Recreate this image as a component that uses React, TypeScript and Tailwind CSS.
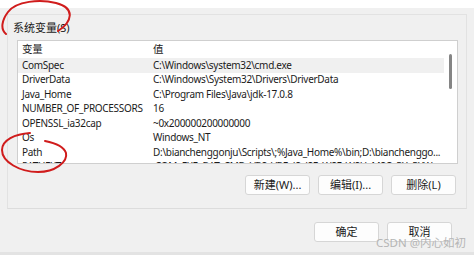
import React from 'react'

const rows: [string, string][] = [
  ['ComSpec', 'C:\\Windows\\system32\\cmd.exe'],
  ['DriverData', 'C:\\Windows\\System32\\Drivers\\DriverData'],
  ['Java_Home', 'C:\\Program Files\\Java\\jdk-17.0.8'],
  ['NUMBER_OF_PROCESSORS', '16'],
  ['OPENSSL_ia32cap', '~0x200000200000000'],
  ['Os', 'Windows_NT'],
  ['Path', 'D:\\bianchenggonju\\Scripts\\;%Java_Home%\\bin;D:\\bianchenggo...'],
  ['PATHEXT', '.COM;.EXE;.BAT;.CMD;.VBS;.VBE;.JS;.JSE;.WSF;.WSH;.MSC;.PY;.PYW'],
]

function Btn({ children }: { children: React.ReactNode }) {
  return (
    <div className="flex h-[20px] w-[65px] items-center justify-center rounded-[3px] border border-[#d6d6d6] bg-[#fdfdfd] text-[11px] text-[#1b1b1b]">
      {children}
    </div>
  )
}

export default function App() {
  return (
    <div
      className="relative h-[255px] w-[474px] overflow-hidden bg-[#f0f0f0] text-[#1b1b1b]"
      style={{ fontFamily: '"Noto Sans", "Noto Sans CJK SC", sans-serif' }}
    >
      <div className="h-[8px] bg-white" />
      <div className="ml-[7px] mr-[7px] mt-[6px] h-[195px] border border-[#e2e2e2] border-b-[#dcdcdc]">
        <div className="h-[6px]" />
        <div className="pl-[5px] text-[11px] leading-[14px]">系统变量(S)</div>
        <div className="ml-[9px] mr-[8px] mt-[5px] h-[124px] overflow-hidden border border-[#cfcfcf] bg-white">
          <div className="relative flex h-full">
            <div className="min-w-0 flex-1 overflow-hidden text-[10px] tracking-[-0.3px]">
              <div className="flex h-[17px] items-center text-[10.5px]">
                <div className="w-[135px] pl-[4px]">变量</div>
                <div>值</div>
              </div>
              {rows.map(([k, v], i) => (
                <div
                  key={k}
                  className={
                    'flex h-[14.5px] items-center whitespace-nowrap ' + (i === 0 ? 'bg-[#f0f0f0]' : '')
                  }
                >
                  <div className="w-[135px] shrink-0 pl-[4px]">{k}</div>
                  <div className="shrink-0">{v}</div>
                </div>
              ))}
            </div>
            <div className="w-[13px] shrink-0 pl-[5px] pt-[13px]">
              <div className="h-[35px] w-[3px] rounded-full bg-[#858585]" />
            </div>
          </div>
        </div>
        <div className="mt-[11px] flex justify-end gap-[8px] pr-[10px]">
          <Btn>新建(W)...</Btn>
          <Btn>编辑(I)...</Btn>
          <Btn>删除(L)</Btn>
        </div>
      </div>
      <div className="mt-[13px] flex justify-end gap-[8px] pr-[22px]">
        <Btn>确定</Btn>
        <Btn>取消</Btn>
      </div>

      <div className="absolute bottom-0 left-0 h-[3px] w-full bg-[#e3e3e3]" />
      <div className="absolute bottom-[4px] right-[8px] text-[11.5px] text-[#b5b5b5]">CSDN @内心如初</div>

      <svg className="pointer-events-none absolute left-0 top-0" width="474" height="255">
        <path
          d="M 58 31 C 72 22, 76 8, 56 3 C 40 -1, 16 1, 8 12 C 2 20, 0 29, 6 34"
          fill="none"
          stroke="#d01c1c"
          strokeWidth="2"
          strokeLinecap="round"
        />
        <path
          d="M 30 133 C 15 134, 2 140, 2 150 C 2 162, 20 172, 38 172 C 55 172, 68 162, 66 153 C 64 147, 55 143, 45 141"
          fill="none"
          stroke="#d01c1c"
          strokeWidth="2"
          strokeLinecap="round"
        />
      </svg>
    </div>
  )
}
